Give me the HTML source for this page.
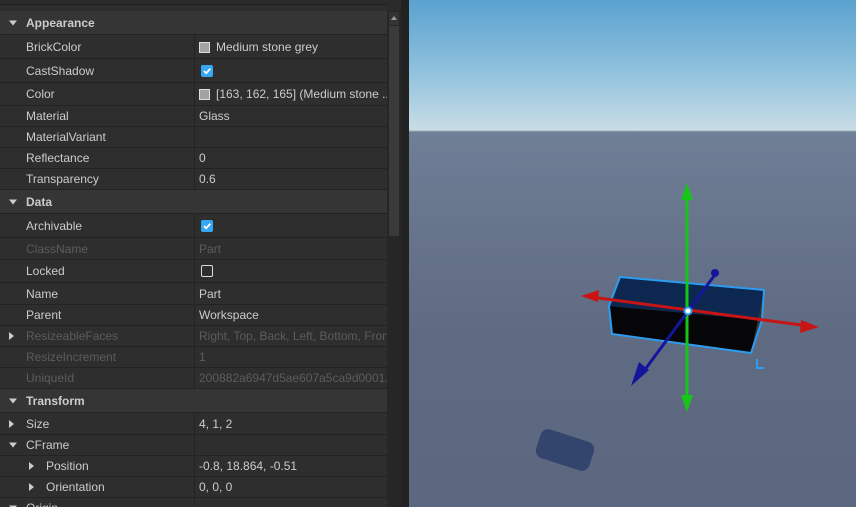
<!DOCTYPE html>
<html style="width:856px;height:507px;overflow:hidden"><head><meta charset="utf-8"><style>
*{margin:0;padding:0;box-sizing:border-box}
body{width:856px;height:507px;overflow:hidden;background:#2b2b2b;font-family:"Liberation Sans",sans-serif;font-size:12px;color:#cccccc;position:relative}
#panel{position:absolute;left:0;top:0;width:387px;height:507px;background:#2e2e2e;overflow:hidden}
.row{position:absolute;left:0;width:387px;border-bottom:1px solid #232323;background:#2e2e2e}
.row .l{position:absolute;left:26px;top:50%;transform:translateY(-50%);white-space:nowrap}
.row .v{position:absolute;left:194px;top:0;bottom:0;border-left:1px solid #232323;right:0}
.row .v span{position:absolute;left:4px;top:50%;transform:translateY(-50%);white-space:nowrap}
.hdr{background:#353535;font-weight:bold}
.hdr .v{display:none}
.dis{color:#5c5c5c}
.tri{position:absolute;left:9px;top:50%;transform:translateY(-50%);width:0;height:0}
.down{border-left:4px solid transparent;border-right:4px solid transparent;border-top:5px solid #ccc}
.right{border-top:4px solid transparent;border-bottom:4px solid transparent;border-left:5px solid #ccc}
.sw{display:inline-block;width:11px;height:11px;background:#a3a2a5;border:1px solid #ddd;vertical-align:-2px;margin-right:6px}
.cb{position:absolute;left:6px;top:50%;transform:translateY(-50%);width:12px;height:12px;border-radius:2px;background:#35a7f3}
.cb svg{position:absolute;left:1px;top:1px}
.cbo{position:absolute;left:6px;top:50%;transform:translateY(-50%);width:12px;height:12px;border:1px solid #ddd;border-radius:2px}
#sb{position:absolute;left:387px;top:11px;width:14px;height:496px;background:#262626}
#thumb{position:absolute;left:389px;top:26px;width:10px;height:210px;background:#3a3a3a}
#div{position:absolute;left:401px;top:0;width:8px;height:507px;background:#222}
#vp{position:absolute;left:409px;top:0;width:447px;height:507px;overflow:hidden;
background:linear-gradient(to bottom,#5aa2cf 0px,#8ec1dc 70px,#c9dde6 130px,#6f7f96 132px,#69778f 200px,#5f6b82 330px,#5c6780 507px)}
</style></head><body>
<div id="panel">
<div style="position:absolute;left:0;top:0;width:401px;height:5px;background:#2b2b2b;border-bottom:1px solid #1e1e1e"></div>
<div class="row hdr" style="top:11px;height:24px"><div class="tri down"></div><div class="l">Appearance</div></div>
<div class="row" style="top:35px;height:24px"><div class="l">BrickColor</div><div class="v"><span><i class="sw"></i>Medium stone grey</span></div></div>
<div class="row" style="top:59px;height:24px"><div class="l">CastShadow</div><div class="v"><div class="cb"><svg width="10" height="10"><path d="M2 5 L4.2 7.2 L8.3 2.8" stroke="#fff" stroke-width="1.8" fill="none"/></svg></div></div></div>
<div class="row" style="top:83px;height:23px"><div class="l">Color</div><div class="v"><span><i class="sw"></i>[163, 162, 165] (Medium stone ...</span></div></div>
<div class="row" style="top:106px;height:21px"><div class="l">Material</div><div class="v"><span>Glass</span></div></div>
<div class="row" style="top:127px;height:21px"><div class="l">MaterialVariant</div><div class="v"></div></div>
<div class="row" style="top:148px;height:21px"><div class="l">Reflectance</div><div class="v"><span>0</span></div></div>
<div class="row" style="top:169px;height:21px"><div class="l">Transparency</div><div class="v"><span>0.6</span></div></div>
<div class="row hdr" style="top:190px;height:24px"><div class="tri down"></div><div class="l">Data</div></div>
<div class="row" style="top:214px;height:24px"><div class="l">Archivable</div><div class="v"><div class="cb"><svg width="10" height="10"><path d="M2 5 L4.2 7.2 L8.3 2.8" stroke="#fff" stroke-width="1.8" fill="none"/></svg></div></div></div>
<div class="row dis" style="top:238px;height:22px"><div class="l">ClassName</div><div class="v"><span>Part</span></div></div>
<div class="row" style="top:260px;height:23px"><div class="l">Locked</div><div class="v"><div class="cbo"></div></div></div>
<div class="row" style="top:283px;height:22px"><div class="l">Name</div><div class="v"><span>Part</span></div></div>
<div class="row" style="top:305px;height:21px"><div class="l">Parent</div><div class="v"><span>Workspace</span></div></div>
<div class="row dis" style="top:326px;height:21px"><div class="tri right"></div><div class="l">ResizeableFaces</div><div class="v"><span>Right, Top, Back, Left, Bottom, Front</span></div></div>
<div class="row dis" style="top:347px;height:21px"><div class="l">ResizeIncrement</div><div class="v"><span>1</span></div></div>
<div class="row dis" style="top:368px;height:21px"><div class="l">UniqueId</div><div class="v"><span>200882a6947d5ae607a5ca9d0001...</span></div></div>
<div class="row hdr" style="top:389px;height:24px"><div class="tri down"></div><div class="l">Transform</div></div>
<div class="row" style="top:413px;height:22px"><div class="tri right"></div><div class="l">Size</div><div class="v"><span>4, 1, 2</span></div></div>
<div class="row" style="top:435px;height:21px"><div class="tri down"></div><div class="l">CFrame</div><div class="v"></div></div>
<div class="row" style="top:456px;height:21px"><div class="tri right" style="left:29px"></div><div class="l" style="left:46px">Position</div><div class="v"><span>-0.8, 18.864, -0.51</span></div></div>
<div class="row" style="top:477px;height:21px"><div class="tri right" style="left:29px"></div><div class="l" style="left:46px">Orientation</div><div class="v"><span>0, 0, 0</span></div></div>
<div class="row" style="top:498px;height:21px"><div class="tri down"></div><div class="l">Origin</div><div class="v"></div></div>
</div>
<div id="sb"></div>
<div style="position:absolute;left:389px;top:12px;width:10px;height:13px;background:#333"></div>
<div style="position:absolute;left:391px;top:16px;width:0;height:0;border-left:3px solid transparent;border-right:3px solid transparent;border-bottom:4px solid #999"></div>
<div id="thumb"></div>
<div id="div"></div>
<div id="vp">
<svg width="447" height="507" style="position:absolute;left:0;top:0">
<rect x="128" y="435" width="56" height="30" rx="8" fill="#2c3f6a" opacity="0.85" transform="rotate(18 156 450)"/>
<polygon points="200,306 211,277 355,290 353,320" fill="#0c2850"/>
<polygon points="200,306 353,320 342,353 203,334" fill="#060608"/>
<polygon points="353,320 355,290 342,353" fill="#333"/>
<polygon points="200,306 211,277 355,290 353,320 342,353 203,334" fill="none" stroke="#2d9cf0" stroke-width="2"/>
<line x1="278" y1="190" x2="278" y2="400" stroke="#17c41a" stroke-width="3"/>
<polygon points="278,183 272,200 284,200" fill="#17c41a"/>
<polygon points="278,412 272,395 284,395" fill="#17c41a"/>
<line x1="182" y1="297" x2="400" y2="326" stroke="#c81414" stroke-width="3"/>
<polygon points="172,296 190,290 189,302" fill="#c81414"/>
<polygon points="410,327 392,320 391,333" fill="#c81414"/>
<line x1="232" y1="375" x2="305" y2="276" stroke="#14159c" stroke-width="3"/>
<circle cx="306" cy="273" r="4" fill="#14159c"/>
<polygon points="222,386 230,362 240,370" fill="#14159c"/>
<circle cx="279" cy="311" r="3.5" fill="#fff" stroke="#2d9cf0" stroke-width="2"/>
<path d="M348 359 V368 H355" stroke="#2d9cf0" stroke-width="2" fill="none"/>
</svg>
</div>
</body></html>
